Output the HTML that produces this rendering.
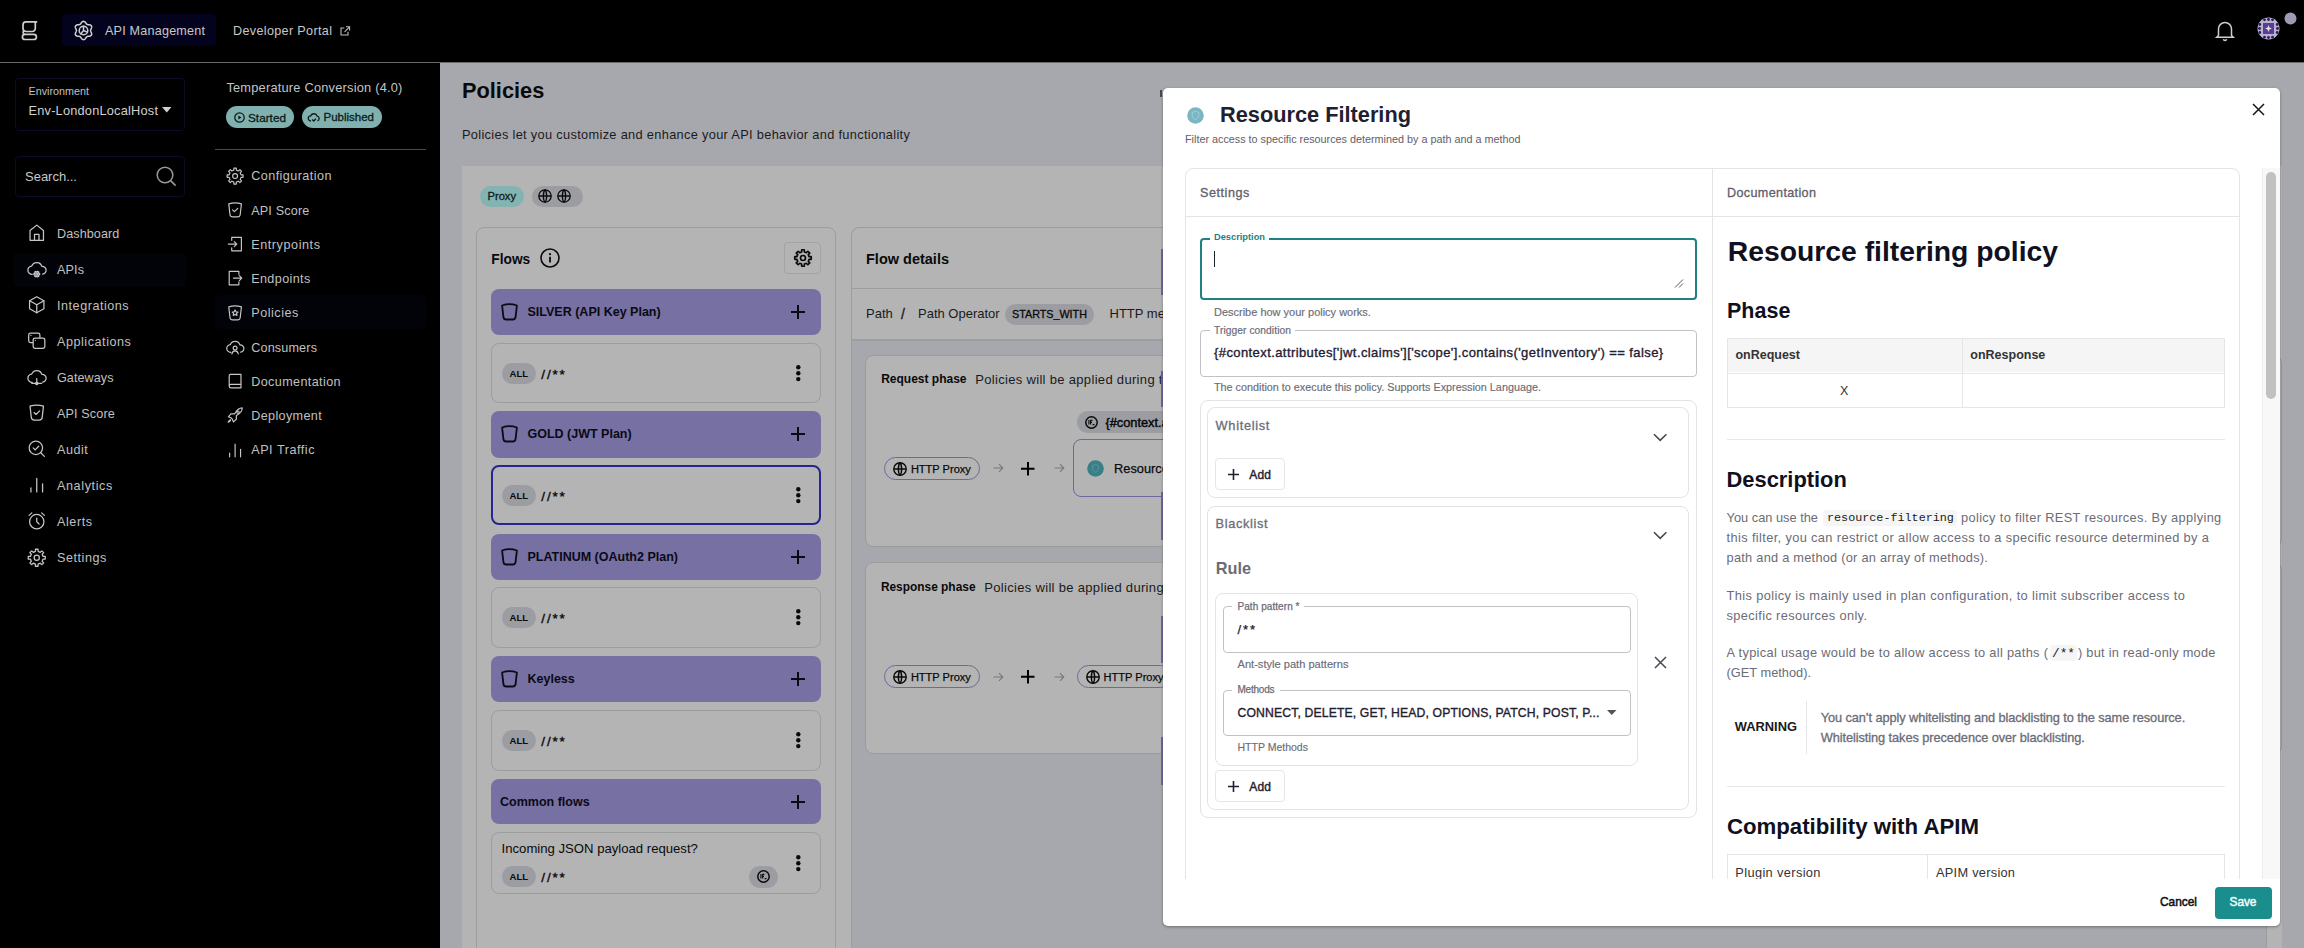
<!DOCTYPE html><html><head><meta charset="utf-8"><style>
html,body{margin:0;padding:0;width:2304px;height:948px;overflow:hidden;background:#000;}
body{position:relative;font-family:"Liberation Sans",sans-serif;}
.t{position:absolute;white-space:nowrap;}
.r{position:absolute;}
.s{position:absolute;overflow:visible;}
</style></head><body>
<div class="r" style="left:0.0px;top:0.0px;width:2304.0px;height:62.0px;background:#000;border-radius:0px;box-sizing:border-box;"></div>
<div class="r" style="left:0.0px;top:62.0px;width:2304.0px;height:1.5px;background:#6b6b6b;border-radius:0px;box-sizing:border-box;"></div>
<div class="r" style="left:0.0px;top:63.0px;width:440.0px;height:885.0px;background:#000;border-radius:0px;box-sizing:border-box;"></div>
<div class="r" style="left:440.0px;top:63.0px;width:1864.0px;height:885.0px;background:#a7a8ad;border-radius:0px;box-sizing:border-box;"></div>
<svg class="s" style="left:21.0px;top:20.0px;" width="17" height="22" viewBox="0 0 17 22"><g fill="none" stroke="#cfcfcf" stroke-width="1.7" stroke-linecap="round"><path d="M5 1.9h9.3v6.6a3 3 0 0 1-3 3H5a3 3 0 0 1-3-3V4.9a3 3 0 0 1 3-3z"/><path d="M14.3 1.9h1.2"/><path d="M2.8 10.6c-1 1-1 2.6.4 3.5"/><rect x="1.4" y="14.3" width="14" height="5.2" rx="2.6"/></g></svg>
<div class="r" style="left:62.0px;top:14.0px;width:154.0px;height:32.0px;background:#03031e;border-radius:4px;box-sizing:border-box;"></div>
<svg class="s" style="left:73.0px;top:20.0px;" width="21" height="21" viewBox="0 0 21 21"><g fill="none" stroke="#cfcfcf" stroke-width="1.5" stroke-linecap="round" stroke-linejoin="round"><path d="M17.55 10.50 L17.59 10.87 L17.71 11.26 L17.89 11.67 L18.11 12.12 L18.32 12.60 L18.51 13.10 L18.64 13.62 L18.68 14.14 L18.61 14.63 L18.42 15.07 L18.13 15.46 L17.74 15.76 L17.27 15.99 L16.76 16.14 L16.23 16.23 L15.70 16.28 L15.21 16.32 L14.76 16.37 L14.37 16.46 L14.03 16.61 L13.72 16.83 L13.45 17.12 L13.18 17.49 L12.90 17.89 L12.60 18.32 L12.25 18.74 L11.86 19.11 L11.44 19.40 L10.98 19.59 L10.50 19.65 L10.02 19.59 L9.56 19.40 L9.14 19.11 L8.75 18.74 L8.40 18.32 L8.10 17.89 L7.82 17.49 L7.55 17.12 L7.28 16.83 L6.98 16.61 L6.63 16.46 L6.24 16.37 L5.79 16.32 L5.30 16.28 L4.77 16.23 L4.24 16.14 L3.73 15.99 L3.26 15.76 L2.87 15.46 L2.58 15.07 L2.39 14.63 L2.32 14.14 L2.36 13.62 L2.49 13.10 L2.68 12.60 L2.89 12.12 L3.11 11.67 L3.29 11.26 L3.41 10.87 L3.45 10.50 L3.41 10.13 L3.29 9.74 L3.11 9.33 L2.89 8.88 L2.68 8.40 L2.49 7.90 L2.36 7.38 L2.32 6.86 L2.39 6.37 L2.58 5.93 L2.87 5.54 L3.26 5.24 L3.73 5.01 L4.24 4.86 L4.77 4.77 L5.30 4.72 L5.79 4.68 L6.24 4.63 L6.63 4.54 L6.97 4.39 L7.28 4.17 L7.55 3.88 L7.82 3.51 L8.10 3.11 L8.40 2.68 L8.75 2.26 L9.14 1.89 L9.56 1.60 L10.02 1.41 L10.50 1.35 L10.98 1.41 L11.44 1.60 L11.86 1.89 L12.25 2.26 L12.60 2.68 L12.90 3.11 L13.18 3.51 L13.45 3.88 L13.72 4.17 L14.03 4.39 L14.37 4.54 L14.76 4.63 L15.21 4.68 L15.70 4.72 L16.23 4.77 L16.76 4.86 L17.27 5.01 L17.74 5.24 L18.13 5.54 L18.42 5.93 L18.61 6.37 L18.68 6.86 L18.64 7.38 L18.51 7.90 L18.32 8.40 L18.11 8.88 L17.89 9.33 L17.71 9.74 L17.59 10.13z"/><circle cx="10.5" cy="10.5" r="4.3"/><path d="M10.5 6.2v4.3l3.7 1.6M10.5 10.5l-2.6 3.4"/></g></svg>
<div class="t" style="left:105.0px;top:23.0px;font-size:12.60px;line-height:16px;color:#c8c8c8;letter-spacing:0.2032584134615383px;">API Management</div>
<div class="t" style="left:233.0px;top:23.0px;font-size:12.60px;line-height:16px;color:#c8c8c8;letter-spacing:0.3432468750000008px;">Developer Portal</div>
<svg class="s" style="left:340.3px;top:25.8px;" width="10.5" height="9.5" viewBox="0 0 10.5 9.5"><g fill="none" stroke="#bcbcbc" stroke-width="1.1"><path d="M4.3 2H1v7h7V5.8"/><path d="M6 .8h3.6v3.6M9.6.8L4.6 5.8"/></g></svg>
<svg class="s" style="left:2215.0px;top:20.0px;" width="20" height="22" viewBox="0 0 20 22"><g fill="none" stroke="#cfcfcf" stroke-width="1.5"><path d="M3.5 15.5V9a6.5 6.5 0 0 1 13 0v6.5l1.8 1.8H1.7z"/><path d="M8.3 19.3a1.8 1.8 0 0 0 3.4 0"/></g></svg>
<svg class="s" style="left:2257.0px;top:17.0px;" width="23" height="23" viewBox="0 0 23 23"><circle cx="11.5" cy="11.5" r="11" fill="#b9b4cb"/><rect x="6" y="6" width="11" height="11" fill="#5c3a9a"/><g fill="#2c1a66"><circle cx="7.5" cy="2.8" r="1.4"/><circle cx="11.5" cy="2.5" r="1.4"/><circle cx="15.5" cy="2.8" r="1.4"/><circle cx="7.5" cy="20.2" r="1.4"/><circle cx="11.5" cy="20.5" r="1.4"/><circle cx="15.5" cy="20.2" r="1.4"/><circle cx="2.8" cy="7.5" r="1.4"/><circle cx="2.5" cy="11.5" r="1.4"/><circle cx="2.8" cy="15.5" r="1.4"/><circle cx="20.2" cy="7.5" r="1.4"/><circle cx="20.5" cy="11.5" r="1.4"/><circle cx="20.2" cy="15.5" r="1.4"/></g><path d="M11.5 8l1 2.5 2.5 1-2.5 1-1 2.5-1-2.5-2.5-1 2.5-1z" fill="#ddd"/></svg>
<svg class="s" style="left:2284.0px;top:12.0px;" width="13" height="13" viewBox="0 0 13 13"><circle cx="6.5" cy="6.5" r="6" fill="#9d9ab3"/></svg>
<div class="r" style="left:15.0px;top:78.0px;width:170.0px;height:53.0px;background:#000;border:1px solid #0b0b26;border-radius:4px;box-sizing:border-box;"></div>
<div class="t" style="left:28.5px;top:84.0px;font-size:10.78px;line-height:14px;color:#c0c0c0;">Environment</div>
<div class="t" style="left:28.5px;top:102.3px;font-size:12.80px;line-height:17px;color:#d0d0d0;letter-spacing:0.19699999999999956px;">Env-LondonLocalHost</div>
<svg class="s" style="left:162.0px;top:107.0px;" width="10" height="6" viewBox="0 0 10 6"><path d="M0 0h9.5L4.75 5.5z" fill="#d0d0d0"/></svg>
<div class="r" style="left:15.0px;top:156.0px;width:170.0px;height:41.0px;background:#000;border:1px solid #0b0b26;border-radius:4px;box-sizing:border-box;"></div>
<div class="t" style="left:25.0px;top:168.3px;font-size:12.99px;line-height:17px;color:#c8c8c8;">Search...</div>
<svg class="s" style="left:156.0px;top:166.0px;" width="21" height="21" viewBox="0 0 21 21"><g fill="none" stroke="#9a9a9a" stroke-width="1.5"><circle cx="9" cy="9" r="7.8"/><path d="M14.6 14.6l5 5"/></g></svg>
<div class="r" style="left:13.0px;top:253.0px;width:173.0px;height:34.0px;background:#020209;border-radius:4px;box-sizing:border-box;"></div>
<div class="t" style="left:57.0px;top:226.0px;font-size:12.60px;line-height:16px;color:#c0c0c0;letter-spacing:0.08218164062499955px;">Dashboard</div>
<svg class="s" style="left:25.8px;top:222.1px;" width="21.5" height="21.5" viewBox="0 0 24 24"><g fill="none" stroke="#c6c6c6" stroke-width="1.4" stroke-linecap="round" stroke-linejoin="round"><path d="M4.5 20.5V9.6L12 3.5l7.5 6.1v10.9z"/><path d="M9.5 20.5v-6.8h5v6.8"/></g></svg>
<div class="t" style="left:57.0px;top:262.0px;font-size:12.60px;line-height:16px;color:#c0c0c0;letter-spacing:0.1301249999999996px;">APIs</div>
<svg class="s" style="left:25.8px;top:258.1px;" width="21.5" height="21.5" viewBox="0 0 24 24"><g fill="none" stroke="#c6c6c6" stroke-width="1.4" stroke-linecap="round" stroke-linejoin="round"><path d="M7 18.2A4.6 4.6 0 0 1 6.4 9 6 6 0 0 1 17.7 9.4 4.3 4.3 0 0 1 18.6 18"/><path d="M14.28 17.25 L15.21 17.23 L15.21 18.77 L14.28 18.75 L13.79 19.60 L14.27 20.39 L12.94 21.16 L12.49 20.35 L11.51 20.35 L11.06 21.16 L9.73 20.39 L10.21 19.60 L9.72 18.75 L8.79 18.77 L8.79 17.23 L9.72 17.25 L10.21 16.40 L9.73 15.61 L11.06 14.84 L11.51 15.65 L12.49 15.65 L12.94 14.84 L14.27 15.61 L13.79 16.40z"/><circle cx="12" cy="18" r="1.1"/></g></svg>
<div class="t" style="left:57.0px;top:298.1px;font-size:12.60px;line-height:16px;color:#c0c0c0;letter-spacing:0.5323764204545437px;">Integrations</div>
<svg class="s" style="left:25.8px;top:294.2px;" width="21.5" height="21.5" viewBox="0 0 24 24"><g fill="none" stroke="#c6c6c6" stroke-width="1.4" stroke-linecap="round" stroke-linejoin="round"><path d="M12 3l8 4.5v9L12 21l-8-4.5v-9z"/><path d="M4 7.5l8 4.5 8-4.5M12 12v9"/></g></svg>
<div class="t" style="left:57.0px;top:334.1px;font-size:12.60px;line-height:16px;color:#c0c0c0;letter-spacing:0.5415866477272728px;">Applications</div>
<svg class="s" style="left:25.8px;top:330.2px;" width="21.5" height="21.5" viewBox="0 0 24 24"><g fill="none" stroke="#c6c6c6" stroke-width="1.4" stroke-linecap="round" stroke-linejoin="round"><rect x="3" y="3.5" width="12.5" height="10.5" rx="2"/><rect x="8" y="9" width="13" height="11.5" rx="2" fill="#000"/><path d="M5.5 6h.01M10.5 11.5h.01"/></g></svg>
<div class="t" style="left:57.0px;top:370.2px;font-size:12.60px;line-height:16px;color:#c0c0c0;letter-spacing:0.06803794642857193px;">Gateways</div>
<svg class="s" style="left:25.8px;top:366.3px;" width="21.5" height="21.5" viewBox="0 0 24 24"><g fill="none" stroke="#c6c6c6" stroke-width="1.4" stroke-linecap="round" stroke-linejoin="round"><path d="M7 18.2A4.6 4.6 0 0 1 6.4 9 6 6 0 0 1 17.7 9.4 4.3 4.3 0 0 1 18.6 18"/><path d="M12 14v5M6.5 19.5h11"/><circle cx="12" cy="19.5" r="1.3" fill="#c6c6c6"/></g></svg>
<div class="t" style="left:57.0px;top:406.2px;font-size:12.60px;line-height:16px;color:#c0c0c0;letter-spacing:0.13417773437500014px;">API Score</div>
<svg class="s" style="left:25.8px;top:402.3px;" width="21.5" height="21.5" viewBox="0 0 24 24"><g fill="none" stroke="#c6c6c6" stroke-width="1.4" stroke-linecap="round" stroke-linejoin="round"><path d="M4.5 4.6c5-1.6 10-1.6 15 0l-1.4 12.6a3.3 3.3 0 0 1-3.3 2.9H9.2a3.3 3.3 0 0 1-3.3-2.9z"/><path d="M9 11.8l2.2 2.1 4-4"/></g></svg>
<div class="t" style="left:57.0px;top:442.2px;font-size:12.60px;line-height:16px;color:#c0c0c0;letter-spacing:0.5199687499999994px;">Audit</div>
<svg class="s" style="left:25.8px;top:438.3px;" width="21.5" height="21.5" viewBox="0 0 24 24"><g fill="none" stroke="#c6c6c6" stroke-width="1.4" stroke-linecap="round" stroke-linejoin="round"><circle cx="11" cy="11" r="7.5"/><path d="M16.5 16.5l4 4"/><path d="M8 11l2.2 2.2 4-4"/></g></svg>
<div class="t" style="left:57.0px;top:478.3px;font-size:12.60px;line-height:16px;color:#c0c0c0;letter-spacing:0.6100390624999994px;">Analytics</div>
<svg class="s" style="left:25.8px;top:474.4px;" width="21.5" height="21.5" viewBox="0 0 24 24"><g fill="none" stroke="#c6c6c6" stroke-width="1.4" stroke-linecap="round" stroke-linejoin="round"><path d="M5.5 20v-4.5M12 20V5M18.5 20v-9"/></g></svg>
<div class="t" style="left:57.0px;top:514.3px;font-size:12.60px;line-height:16px;color:#c0c0c0;letter-spacing:0.5582499999999996px;">Alerts</div>
<svg class="s" style="left:25.8px;top:510.4px;" width="21.5" height="21.5" viewBox="0 0 24 24"><g fill="none" stroke="#c6c6c6" stroke-width="1.4" stroke-linecap="round" stroke-linejoin="round"><circle cx="12" cy="13" r="8"/><path d="M12 9v4.2l2.6 2.4M3.5 6l3-2.8M20.5 6l-3-2.8"/></g></svg>
<div class="t" style="left:57.0px;top:550.4px;font-size:12.60px;line-height:16px;color:#c0c0c0;letter-spacing:0.5530959821428577px;">Settings</div>
<svg class="s" style="left:25.8px;top:546.5px;" width="21.5" height="21.5" viewBox="0 0 24 24"><g fill="none" stroke="#c6c6c6" stroke-width="1.4" stroke-linecap="round" stroke-linejoin="round"><path d="M19.04 10.48 L21.49 10.57 L21.49 13.43 L19.04 13.52 L18.05 15.91 L19.72 17.70 L17.70 19.72 L15.91 18.05 L13.52 19.04 L13.43 21.49 L10.57 21.49 L10.48 19.04 L8.09 18.05 L6.30 19.72 L4.28 17.70 L5.95 15.91 L4.96 13.52 L2.51 13.43 L2.51 10.57 L4.96 10.48 L5.95 8.09 L4.28 6.30 L6.30 4.28 L8.09 5.95 L10.48 4.96 L10.57 2.51 L13.43 2.51 L13.52 4.96 L15.91 5.95 L17.70 4.28 L19.72 6.30 L18.05 8.09z"/><circle cx="12" cy="12" r="2.9"/></g></svg>
<div class="t" style="left:226.4px;top:79.1px;font-size:12.80px;line-height:17px;color:#c4c4c4;letter-spacing:0.22085185185185058px;">Temperature Conversion (4.0)</div>
<div class="r" style="left:226.0px;top:106.3px;width:68.0px;height:21.7px;background:#80b1af;border-radius:11px;box-sizing:border-box;"></div>
<svg class="s" style="left:233.5px;top:112.0px;" width="11" height="11" viewBox="0 0 11 11"><circle cx="5.5" cy="5.5" r="4.7" fill="none" stroke="#0c1a1a" stroke-width="1.3"/><path d="M4.3 3.4v4.2l3.2-2.1z" fill="#0c1a1a"/></svg>
<div class="t" style="left:248.0px;top:109.7px;font-size:11.79px;line-height:15px;color:#0c1a1a;-webkit-text-stroke:0.3px #0c1a1a;">Started</div>
<div class="r" style="left:301.6px;top:106.3px;width:80.4px;height:21.7px;background:#80b1af;border-radius:11px;box-sizing:border-box;"></div>
<svg class="s" style="left:308.0px;top:111.5px;" width="11" height="11" viewBox="0 0 11 11"><path d="M3 9A2.6 2.6 0 0 1 2.7 3.8 3.5 3.5 0 0 1 9.2 4.1a2.5 2.5 0 0 1 .3 4.8M4.2 7.6l1.5 1.4 2.3-2.3" fill="none" stroke="#0c1a1a" stroke-width="1.3"/></svg>
<div class="t" style="left:323.5px;top:109.7px;font-size:11.50px;line-height:15px;color:#0c1a1a;-webkit-text-stroke:0.3px #0c1a1a;">Published</div>
<div class="r" style="left:215.0px;top:149.0px;width:211.0px;height:1.0px;background:#4a4a4a;border-radius:0px;box-sizing:border-box;"></div>
<div class="r" style="left:215.0px;top:295.0px;width:211.0px;height:33.5px;background:#020209;border-radius:4px;box-sizing:border-box;"></div>
<div class="t" style="left:251.2px;top:168.2px;font-size:12.60px;line-height:16px;color:#c0c0c0;letter-spacing:0.445807291666668px;">Configuration</div>
<svg class="s" style="left:224.7px;top:165.5px;" width="20.2" height="20.2" viewBox="0 0 24 24"><g fill="none" stroke="#c6c6c6" stroke-width="1.4" stroke-linecap="round" stroke-linejoin="round"><path d="M19.04 10.48 L21.49 10.57 L21.49 13.43 L19.04 13.52 L18.05 15.91 L19.72 17.70 L17.70 19.72 L15.91 18.05 L13.52 19.04 L13.43 21.49 L10.57 21.49 L10.48 19.04 L8.09 18.05 L6.30 19.72 L4.28 17.70 L5.95 15.91 L4.96 13.52 L2.51 13.43 L2.51 10.57 L4.96 10.48 L5.95 8.09 L4.28 6.30 L6.30 4.28 L8.09 5.95 L10.48 4.96 L10.57 2.51 L13.43 2.51 L13.52 4.96 L15.91 5.95 L17.70 4.28 L19.72 6.30 L18.05 8.09z"/><circle cx="12" cy="12" r="2.9"/></g></svg>
<div class="t" style="left:251.2px;top:202.5px;font-size:12.60px;line-height:16px;color:#c0c0c0;letter-spacing:0.18417773437499907px;">API Score</div>
<svg class="s" style="left:224.7px;top:199.8px;" width="20.2" height="20.2" viewBox="0 0 24 24"><g fill="none" stroke="#c6c6c6" stroke-width="1.4" stroke-linecap="round" stroke-linejoin="round"><path d="M4.5 4.6c5-1.6 10-1.6 15 0l-1.4 12.6a3.3 3.3 0 0 1-3.3 2.9H9.2a3.3 3.3 0 0 1-3.3-2.9z"/><path d="M9 11.8l2.2 2.1 4-4"/></g></svg>
<div class="t" style="left:251.2px;top:236.7px;font-size:12.60px;line-height:16px;color:#c0c0c0;letter-spacing:0.5767515625000016px;">Entrypoints</div>
<svg class="s" style="left:224.7px;top:234.0px;" width="20.2" height="20.2" viewBox="0 0 24 24"><g fill="none" stroke="#c6c6c6" stroke-width="1.4" stroke-linecap="round" stroke-linejoin="round"><path d="M8 7.5V4h11.5v16H8v-3.5"/><path d="M4 12h10M11 9l3 3-3 3"/></g></svg>
<div class="t" style="left:251.2px;top:271.0px;font-size:12.60px;line-height:16px;color:#c0c0c0;letter-spacing:0.38207226562500374px;">Endpoints</div>
<svg class="s" style="left:224.7px;top:268.3px;" width="20.2" height="20.2" viewBox="0 0 24 24"><g fill="none" stroke="#c6c6c6" stroke-width="1.4" stroke-linecap="round" stroke-linejoin="round"><path d="M16.5 7.5V4H5v16h11.5v-3.5"/><path d="M10 12h10M17 9l3 3-3 3"/></g></svg>
<div class="t" style="left:251.2px;top:305.3px;font-size:12.60px;line-height:16px;color:#c0c0c0;letter-spacing:0.5401696428571421px;">Policies</div>
<svg class="s" style="left:224.7px;top:302.6px;" width="20.2" height="20.2" viewBox="0 0 24 24"><g fill="none" stroke="#c6c6c6" stroke-width="1.4" stroke-linecap="round" stroke-linejoin="round"><path d="M4.5 4.6c5-1.6 10-1.6 15 0l-1.4 12.6a3.3 3.3 0 0 1-3.3 2.9H9.2a3.3 3.3 0 0 1-3.3-2.9z"/><path d="M12 8.3l1.1 2.2 2.4.3-1.8 1.6.5 2.4-2.2-1.2-2.2 1.2.5-2.4-1.8-1.6 2.4-.3z"/></g></svg>
<div class="t" style="left:251.2px;top:339.6px;font-size:12.60px;line-height:16px;color:#c0c0c0;letter-spacing:0.1720742187500015px;">Consumers</div>
<svg class="s" style="left:224.7px;top:336.9px;" width="20.2" height="20.2" viewBox="0 0 24 24"><g fill="none" stroke="#c6c6c6" stroke-width="1.4" stroke-linecap="round" stroke-linejoin="round"><path d="M7 18.2A4.6 4.6 0 0 1 6.4 9 6 6 0 0 1 17.7 9.4 4.3 4.3 0 0 1 18.6 18"/><circle cx="12" cy="13.2" r="2.3"/><path d="M8.2 20c.5-2.4 2-3.6 3.8-3.6s3.3 1.2 3.8 3.6"/></g></svg>
<div class="t" style="left:251.2px;top:373.8px;font-size:12.60px;line-height:16px;color:#c0c0c0;letter-spacing:0.3874375000000043px;">Documentation</div>
<svg class="s" style="left:224.7px;top:371.1px;" width="20.2" height="20.2" viewBox="0 0 24 24"><g fill="none" stroke="#c6c6c6" stroke-width="1.4" stroke-linecap="round" stroke-linejoin="round"><path d="M5 18V5.5A1.5 1.5 0 0 1 6.5 4H19v16H7a2 2 0 0 1-2-2zM5 18a2 2 0 0 1 2-2h12"/></g></svg>
<div class="t" style="left:251.2px;top:408.1px;font-size:12.60px;line-height:16px;color:#c0c0c0;letter-spacing:0.36280208333333364px;">Deployment</div>
<svg class="s" style="left:224.7px;top:405.4px;" width="20.2" height="20.2" viewBox="0 0 24 24"><g fill="none" stroke="#c6c6c6" stroke-width="1.4" stroke-linecap="round" stroke-linejoin="round"><path d="M7.5 15.5L4 14l3-3.5h4.5C14 6 17.5 3.5 20.5 3.5c0 3-2.5 6.5-7 9V17L10 20l-1.5-3.5z"/><circle cx="15.5" cy="8.5" r="1.4"/><path d="M6.5 17.5c-1.3.6-2.3 1.6-2.8 3 1.4-.5 2.4-1.5 3-2.8"/></g></svg>
<div class="t" style="left:251.2px;top:442.4px;font-size:12.60px;line-height:16px;color:#c0c0c0;letter-spacing:0.5410875000000018px;">API Traffic</div>
<svg class="s" style="left:224.7px;top:439.7px;" width="20.2" height="20.2" viewBox="0 0 24 24"><g fill="none" stroke="#c6c6c6" stroke-width="1.4" stroke-linecap="round" stroke-linejoin="round"><path d="M5.5 20v-4.5M12 20V5M18.5 20v-9"/></g></svg>
<div class="t" style="left:462.0px;top:76.7px;font-size:21.77px;line-height:28px;font-weight:700;color:#0a0a0a;">Policies</div>
<div class="t" style="left:462.0px;top:125.5px;font-size:12.80px;line-height:17px;color:#1b1b1b;letter-spacing:0.3178493150684928px;">Policies let you customize and enhance your API behavior and functionality</div>
<div class="r" style="left:462.0px;top:166.0px;width:1820.0px;height:782.0px;background:#b4b4b4;border-radius:0px;box-sizing:border-box;"></div>
<div class="r" style="left:479.6px;top:185.8px;width:44.4px;height:20.9px;background:#84b4b2;border-radius:11px;box-sizing:border-box;"></div>
<div class="t" style="left:487.5px;top:189.3px;font-size:11.15px;line-height:14px;color:#0d1c1c;-webkit-text-stroke:0.3px #0d1c1c;">Proxy</div>
<div class="r" style="left:531.9px;top:185.8px;width:50.7px;height:20.9px;background:#9c9da2;border-radius:11px;box-sizing:border-box;"></div>
<svg class="s" style="left:538.0px;top:189.3px;" width="14" height="14" viewBox="0 0 14 14"><g fill="none" stroke="#0a0a0a" stroke-width="1.3"><circle cx="7" cy="7" r="6.2"/><path d="M.8 7h12.4M7 .8c-2.2 2.2-2.2 10.2 0 12.4M7 .8c2.2 2.2 2.2 10.2 0 12.4"/></g></svg>
<svg class="s" style="left:557.0px;top:189.3px;" width="14" height="14" viewBox="0 0 14 14"><g fill="none" stroke="#0a0a0a" stroke-width="1.3"><circle cx="7" cy="7" r="6.2"/><path d="M.8 7h12.4M7 .8c-2.2 2.2-2.2 10.2 0 12.4M7 .8c2.2 2.2 2.2 10.2 0 12.4"/></g></svg>
<div class="r" style="left:476.4px;top:227.0px;width:360.1px;height:733.0px;background:#b4b4b4;border:1px solid #9d9d9d;border-radius:8px;box-sizing:border-box;"></div>
<div class="t" style="left:491.3px;top:250.5px;font-size:13.76px;line-height:18px;font-weight:700;color:#0a0a0a;">Flows</div>
<svg class="s" style="left:539.5px;top:248.3px;" width="20" height="20" viewBox="0 0 20 20"><circle cx="10" cy="10" r="9" fill="none" stroke="#0a0a0a" stroke-width="1.6"/><circle cx="10" cy="6.2" r="1.1" fill="#0a0a0a"/><path d="M10 8.8v5.6" stroke="#0a0a0a" stroke-width="1.8"/></svg>
<div class="r" style="left:784.4px;top:242.0px;width:36.3px;height:31.8px;background:#b4b4b4;border:1px solid #a3a3a3;border-radius:4px;box-sizing:border-box;"></div>
<svg class="s" style="left:793.0px;top:248.3px;" width="20" height="20" viewBox="0 0 24 24"><g fill="none" stroke="#0a0a0a" stroke-width="2.0" stroke-linecap="round" stroke-linejoin="round"><path d="M19.32 10.36 L21.88 10.44 L21.88 13.56 L19.32 13.64 L18.33 16.02 L20.09 17.88 L17.88 20.09 L16.02 18.33 L13.64 19.32 L13.56 21.88 L10.44 21.88 L10.36 19.32 L7.98 18.33 L6.12 20.09 L3.91 17.88 L5.67 16.02 L4.68 13.64 L2.12 13.56 L2.12 10.44 L4.68 10.36 L5.67 7.98 L3.91 6.12 L6.12 3.91 L7.98 5.67 L10.36 4.68 L10.44 2.12 L13.56 2.12 L13.64 4.68 L16.02 5.67 L17.88 3.91 L20.09 6.12 L18.33 7.98z"/><circle cx="12" cy="12" r="3"/></g></svg>
<div class="r" style="left:491.3px;top:288.5px;width:329.4px;height:46.5px;background:#7670a3;border-radius:8px;box-sizing:border-box;"></div>
<svg class="s" style="left:501.0px;top:302.8px;" width="17" height="17" viewBox="0 0 17 17"><path d="M1.1 2.5c4.9-1.7 9.9-1.7 14.8 0l-1.3 11.3a3 3 0 0 1-3 2.7H5.4a3 3 0 0 1-3-2.7z" fill="none" stroke="#0a0a14" stroke-width="1.8" stroke-linejoin="round"/></svg>
<div class="t" style="left:527.5px;top:303.8px;font-size:12.50px;line-height:16px;font-weight:700;color:#0a0a14;">SILVER (API Key Plan)</div>
<svg class="s" style="left:791.2px;top:304.8px;" width="14" height="14" viewBox="0 0 14 14"><path d="M7 0v14M0 7h14" stroke="#0a0a14" stroke-width="2"/></svg>
<div class="r" style="left:491.3px;top:411.0px;width:329.4px;height:46.5px;background:#7670a3;border-radius:8px;box-sizing:border-box;"></div>
<svg class="s" style="left:501.0px;top:425.2px;" width="17" height="17" viewBox="0 0 17 17"><path d="M1.1 2.5c4.9-1.7 9.9-1.7 14.8 0l-1.3 11.3a3 3 0 0 1-3 2.7H5.4a3 3 0 0 1-3-2.7z" fill="none" stroke="#0a0a14" stroke-width="1.8" stroke-linejoin="round"/></svg>
<div class="t" style="left:527.5px;top:426.2px;font-size:12.50px;line-height:16px;font-weight:700;color:#0a0a14;">GOLD (JWT Plan)</div>
<svg class="s" style="left:791.2px;top:427.2px;" width="14" height="14" viewBox="0 0 14 14"><path d="M7 0v14M0 7h14" stroke="#0a0a14" stroke-width="2"/></svg>
<div class="r" style="left:491.3px;top:533.5px;width:329.4px;height:46.5px;background:#7670a3;border-radius:8px;box-sizing:border-box;"></div>
<svg class="s" style="left:501.0px;top:547.8px;" width="17" height="17" viewBox="0 0 17 17"><path d="M1.1 2.5c4.9-1.7 9.9-1.7 14.8 0l-1.3 11.3a3 3 0 0 1-3 2.7H5.4a3 3 0 0 1-3-2.7z" fill="none" stroke="#0a0a14" stroke-width="1.8" stroke-linejoin="round"/></svg>
<div class="t" style="left:527.5px;top:548.8px;font-size:12.50px;line-height:16px;font-weight:700;color:#0a0a14;">PLATINUM (OAuth2 Plan)</div>
<svg class="s" style="left:791.2px;top:549.8px;" width="14" height="14" viewBox="0 0 14 14"><path d="M7 0v14M0 7h14" stroke="#0a0a14" stroke-width="2"/></svg>
<div class="r" style="left:491.3px;top:656.2px;width:329.4px;height:45.5px;background:#7670a3;border-radius:8px;box-sizing:border-box;"></div>
<svg class="s" style="left:501.0px;top:670.0px;" width="17" height="17" viewBox="0 0 17 17"><path d="M1.1 2.5c4.9-1.7 9.9-1.7 14.8 0l-1.3 11.3a3 3 0 0 1-3 2.7H5.4a3 3 0 0 1-3-2.7z" fill="none" stroke="#0a0a14" stroke-width="1.8" stroke-linejoin="round"/></svg>
<div class="t" style="left:527.5px;top:671.0px;font-size:12.50px;line-height:16px;font-weight:700;color:#0a0a14;">Keyless</div>
<svg class="s" style="left:791.2px;top:672.0px;" width="14" height="14" viewBox="0 0 14 14"><path d="M7 0v14M0 7h14" stroke="#0a0a14" stroke-width="2"/></svg>
<div class="r" style="left:491.3px;top:778.7px;width:329.4px;height:45.8px;background:#7670a3;border-radius:8px;box-sizing:border-box;"></div>
<div class="t" style="left:500.0px;top:793.6px;font-size:12.50px;line-height:16px;font-weight:700;color:#0a0a14;">Common flows</div>
<svg class="s" style="left:791.2px;top:794.6px;" width="14" height="14" viewBox="0 0 14 14"><path d="M7 0v14M0 7h14" stroke="#0a0a14" stroke-width="2"/></svg>
<div class="r" style="left:491.0px;top:343.0px;width:330.0px;height:60.4px;background:#b4b4b4;border:1px solid #9d9d9d;border-radius:8px;box-sizing:border-box;"></div>
<div class="r" style="left:502.0px;top:362.6px;width:34.1px;height:21.2px;background:#9c9da2;border-radius:11px;box-sizing:border-box;"></div>
<div class="t" style="left:509.6px;top:367.6px;font-size:9.57px;line-height:12px;font-weight:700;color:#0a0a0a;">ALL</div>
<div class="t" style="left:541.3px;top:365.5px;font-size:13.50px;line-height:18px;color:#0a0a0a;letter-spacing:1.8307552083333338px;-webkit-text-stroke:0.35px #0a0a0a;">//**</div>
<svg class="s" style="left:795.6px;top:365.0px;" width="5" height="17" viewBox="0 0 5 17"><g fill="#0a0a0a"><circle cx="2.3" cy="2.3" r="2.2"/><circle cx="2.3" cy="8.2" r="2.2"/><circle cx="2.3" cy="14.1" r="2.2"/></g></svg>
<div class="r" style="left:491.0px;top:465.4px;width:330.0px;height:59.9px;background:#b4b4b4;border:2px solid #2b2490;border-radius:8px;box-sizing:border-box;"></div>
<div class="r" style="left:502.0px;top:484.7px;width:34.1px;height:21.2px;background:#9c9da2;border-radius:11px;box-sizing:border-box;"></div>
<div class="t" style="left:509.6px;top:489.7px;font-size:9.57px;line-height:12px;font-weight:700;color:#0a0a0a;">ALL</div>
<div class="t" style="left:541.3px;top:487.6px;font-size:13.50px;line-height:18px;color:#0a0a0a;letter-spacing:1.8307552083333338px;-webkit-text-stroke:0.35px #0a0a0a;">//**</div>
<svg class="s" style="left:795.6px;top:487.1px;" width="5" height="17" viewBox="0 0 5 17"><g fill="#0a0a0a"><circle cx="2.3" cy="2.3" r="2.2"/><circle cx="2.3" cy="8.2" r="2.2"/><circle cx="2.3" cy="14.1" r="2.2"/></g></svg>
<div class="r" style="left:491.0px;top:587.3px;width:330.0px;height:60.7px;background:#b4b4b4;border:1px solid #9d9d9d;border-radius:8px;box-sizing:border-box;"></div>
<div class="r" style="left:502.0px;top:607.0px;width:34.1px;height:21.2px;background:#9c9da2;border-radius:11px;box-sizing:border-box;"></div>
<div class="t" style="left:509.6px;top:612.0px;font-size:9.57px;line-height:12px;font-weight:700;color:#0a0a0a;">ALL</div>
<div class="t" style="left:541.3px;top:609.9px;font-size:13.50px;line-height:18px;color:#0a0a0a;letter-spacing:1.8307552083333338px;-webkit-text-stroke:0.35px #0a0a0a;">//**</div>
<svg class="s" style="left:795.6px;top:609.4px;" width="5" height="17" viewBox="0 0 5 17"><g fill="#0a0a0a"><circle cx="2.3" cy="2.3" r="2.2"/><circle cx="2.3" cy="8.2" r="2.2"/><circle cx="2.3" cy="14.1" r="2.2"/></g></svg>
<div class="r" style="left:491.0px;top:709.9px;width:330.0px;height:60.7px;background:#b4b4b4;border:1px solid #9d9d9d;border-radius:8px;box-sizing:border-box;"></div>
<div class="r" style="left:502.0px;top:729.6px;width:34.1px;height:21.2px;background:#9c9da2;border-radius:11px;box-sizing:border-box;"></div>
<div class="t" style="left:509.6px;top:734.6px;font-size:9.57px;line-height:12px;font-weight:700;color:#0a0a0a;">ALL</div>
<div class="t" style="left:541.3px;top:732.5px;font-size:13.50px;line-height:18px;color:#0a0a0a;letter-spacing:1.8307552083333338px;-webkit-text-stroke:0.35px #0a0a0a;">//**</div>
<svg class="s" style="left:795.6px;top:732.0px;" width="5" height="17" viewBox="0 0 5 17"><g fill="#0a0a0a"><circle cx="2.3" cy="2.3" r="2.2"/><circle cx="2.3" cy="8.2" r="2.2"/><circle cx="2.3" cy="14.1" r="2.2"/></g></svg>
<div class="r" style="left:491.0px;top:832.3px;width:330.0px;height:61.3px;background:#b4b4b4;border:1px solid #9d9d9d;border-radius:8px;box-sizing:border-box;"></div>
<div class="t" style="left:501.6px;top:839.5px;font-size:13.14px;line-height:17px;color:#0a0a0a;">Incoming JSON payload request?</div>
<div class="r" style="left:502.0px;top:865.9px;width:34.1px;height:21.2px;background:#9c9da2;border-radius:11px;box-sizing:border-box;"></div>
<div class="t" style="left:509.6px;top:870.9px;font-size:9.57px;line-height:12px;font-weight:700;color:#0a0a0a;">ALL</div>
<div class="t" style="left:541.3px;top:868.8px;font-size:13.50px;line-height:18px;color:#0a0a0a;letter-spacing:1.8307552083333338px;-webkit-text-stroke:0.35px #0a0a0a;">//**</div>
<div class="r" style="left:749.0px;top:865.8px;width:29.4px;height:21.8px;background:#9c9da2;border-radius:11px;box-sizing:border-box;"></div>
<svg class="s" style="left:757.2px;top:870.2px;" width="13" height="13" viewBox="0 0 13 13"><circle cx="6.5" cy="6.5" r="5.7" fill="none" stroke="#0a0a0a" stroke-width="1.5"/><path d="M3.9 4v4.6M5.6 4v4.6M5.4 4.4h2M5.4 6.4h1.6M7.6 8.6h1.8" stroke="#0a0a0a" stroke-width="1.1"/></svg>
<svg class="s" style="left:795.6px;top:854.7px;" width="5" height="17" viewBox="0 0 5 17"><g fill="#0a0a0a"><circle cx="2.3" cy="2.3" r="2.2"/><circle cx="2.3" cy="8.2" r="2.2"/><circle cx="2.3" cy="14.1" r="2.2"/></g></svg>
<div class="r" style="left:851.0px;top:227.0px;width:1416.0px;height:733.0px;background:#a7a8ad;border:1px solid #9d9d9d;border-radius:8px;box-sizing:border-box;"></div>
<div class="r" style="left:852.0px;top:228.0px;width:1414.0px;height:111.5px;background:#b4b4b4;border-radius:8px 8px 0 0;box-sizing:border-box;"></div>
<div class="r" style="left:852.0px;top:288.0px;width:1414.0px;height:1.0px;background:#9d9d9d;border-radius:0px;box-sizing:border-box;"></div>
<div class="r" style="left:852.0px;top:338.7px;width:1414.0px;height:2.0px;background:#9c9da1;border-radius:0px;box-sizing:border-box;"></div>
<div class="t" style="left:866.0px;top:250.0px;font-size:14.50px;line-height:19px;font-weight:700;color:#0a0a0a;">Flow details</div>
<div class="t" style="left:866.0px;top:305.0px;font-size:13.00px;line-height:17px;color:#1a1a1a;">Path</div>
<div class="t" style="left:901.0px;top:304.5px;font-size:14.00px;line-height:18px;color:#1a1a1a;-webkit-text-stroke:0.3px #1a1a1a;">/</div>
<div class="t" style="left:918.0px;top:305.0px;font-size:13.00px;line-height:17px;color:#1a1a1a;">Path Operator</div>
<div class="r" style="left:1004.6px;top:304.0px;width:89.7px;height:20.6px;background:#9c9da2;border-radius:11px;box-sizing:border-box;"></div>
<div class="t" style="left:1012.0px;top:307.3px;font-size:10.77px;line-height:14px;color:#0a0a0a;-webkit-text-stroke:0.3px #0a0a0a;">STARTS_WITH</div>
<div class="t" style="left:1109.5px;top:305.0px;font-size:13.00px;line-height:17px;color:#1a1a1a;">HTTP methods</div>
<div class="r" style="left:865.2px;top:354.6px;width:1416.8px;height:192.9px;background:#b4b4b4;border:1px solid #9b9b9b;border-radius:8px;box-sizing:border-box;"></div>
<div class="t" style="left:881.2px;top:371.3px;font-size:12.01px;line-height:16px;font-weight:700;color:#0a0a0a;">Request phase</div>
<div class="t" style="left:975.2px;top:370.8px;font-size:13.00px;line-height:17px;color:#1a1a1a;letter-spacing:0.32px;">Policies will be applied during the request</div>
<div class="r" style="left:1077.0px;top:410.7px;width:223.0px;height:22.3px;background:#9c9da2;border-radius:11px;box-sizing:border-box;"></div>
<svg class="s" style="left:1085.0px;top:415.9px;" width="13" height="13" viewBox="0 0 13 13"><circle cx="6.5" cy="6.5" r="5.7" fill="none" stroke="#0a0a0a" stroke-width="1.5"/><path d="M3.9 4v4.6M5.6 4v4.6M5.4 4.4h2M5.4 6.4h1.6M7.6 8.6h1.8" stroke="#0a0a0a" stroke-width="1.1"/></svg>
<div class="t" style="left:1105.4px;top:413.5px;font-size:12.80px;line-height:17px;color:#0a0a0a;-webkit-text-stroke:0.45px #0a0a0a;">{#context.attributes}</div>
<div class="r" style="left:1073.2px;top:439.3px;width:326.8px;height:58.2px;background:#b4b4b4;border:1px solid #6f68a0;border-radius:8px;box-sizing:border-box;"></div>
<svg class="s" style="left:1087.2px;top:460.3px;" width="17" height="17" viewBox="0 0 17 17"><circle cx="8.5" cy="8.5" r="8.3" fill="#3a7f87"/><path d="M8.5 4.6l3 1.2v2.4c0 2-1.3 3.3-3 4.1-1.7-.8-3-2.1-3-4.1V5.8z" fill="none" stroke="#5d9aa1" stroke-width=".8"/></svg>
<div class="t" style="left:1114.1px;top:460.2px;font-size:12.80px;line-height:17px;color:#0a0a0a;-webkit-text-stroke:0.25px #0a0a0a;">Resource Filtering</div>
<div class="r" style="left:865.2px;top:562.3px;width:1416.8px;height:192.0px;background:#b4b4b4;border:1px solid #9b9b9b;border-radius:8px;box-sizing:border-box;"></div>
<div class="t" style="left:880.9px;top:579.8px;font-size:11.92px;line-height:15px;font-weight:700;color:#0a0a0a;">Response phase</div>
<div class="t" style="left:984.2px;top:578.8px;font-size:13.00px;line-height:17px;color:#1a1a1a;letter-spacing:0.32px;">Policies will be applied during the response</div>
<div class="r" style="left:884.0px;top:456.9px;width:95.5px;height:23.0px;background:transparent;border:1.2px solid #6f68a0;border-radius:12px;box-sizing:border-box;"></div>
<svg class="s" style="left:892.8px;top:461.7px;" width="14" height="14" viewBox="0 0 14 14"><g fill="none" stroke="#0a0a0a" stroke-width="1.4"><circle cx="7" cy="7" r="6.2"/><path d="M.8 7h12.4M7 .8c-2.2 2.2-2.2 10.2 0 12.4M7 .8c2.2 2.2 2.2 10.2 0 12.4"/></g></svg>
<div class="t" style="left:910.9px;top:461.7px;font-size:11.06px;line-height:14px;color:#0a0a0a;-webkit-text-stroke:0.25px #0a0a0a;">HTTP Proxy</div>
<svg class="s" style="left:992.7px;top:463.4px;" width="11" height="10" viewBox="0 0 11 10"><path d="M.5 5h9.5M6 1.2L9.8 5 6 8.8" fill="none" stroke="#787878" stroke-width="1.1"/></svg>
<svg class="s" style="left:1021.3px;top:461.7px;" width="14" height="14" viewBox="0 0 14 14"><path d="M7 0v13.5M0 6.75h13.5" stroke="#000" stroke-width="2"/></svg>
<svg class="s" style="left:1054.0px;top:463.4px;" width="11" height="10" viewBox="0 0 11 10"><path d="M.5 5h9.5M6 1.2L9.8 5 6 8.8" fill="none" stroke="#787878" stroke-width="1.1"/></svg>
<div class="r" style="left:884.0px;top:665.3px;width:95.5px;height:23.0px;background:transparent;border:1.2px solid #6f68a0;border-radius:12px;box-sizing:border-box;"></div>
<svg class="s" style="left:892.8px;top:670.1px;" width="14" height="14" viewBox="0 0 14 14"><g fill="none" stroke="#0a0a0a" stroke-width="1.4"><circle cx="7" cy="7" r="6.2"/><path d="M.8 7h12.4M7 .8c-2.2 2.2-2.2 10.2 0 12.4M7 .8c2.2 2.2 2.2 10.2 0 12.4"/></g></svg>
<div class="t" style="left:910.9px;top:670.1px;font-size:11.06px;line-height:14px;color:#0a0a0a;-webkit-text-stroke:0.25px #0a0a0a;">HTTP Proxy</div>
<svg class="s" style="left:992.7px;top:671.8px;" width="11" height="10" viewBox="0 0 11 10"><path d="M.5 5h9.5M6 1.2L9.8 5 6 8.8" fill="none" stroke="#787878" stroke-width="1.1"/></svg>
<svg class="s" style="left:1021.3px;top:670.1px;" width="14" height="14" viewBox="0 0 14 14"><path d="M7 0v13.5M0 6.75h13.5" stroke="#000" stroke-width="2"/></svg>
<svg class="s" style="left:1054.0px;top:671.8px;" width="11" height="10" viewBox="0 0 11 10"><path d="M.5 5h9.5M6 1.2L9.8 5 6 8.8" fill="none" stroke="#787878" stroke-width="1.1"/></svg>
<div class="r" style="left:1076.7px;top:665.3px;width:95.5px;height:23.0px;background:transparent;border:1.2px solid #6f68a0;border-radius:12px;box-sizing:border-box;"></div>
<svg class="s" style="left:1085.5px;top:670.1px;" width="14" height="14" viewBox="0 0 14 14"><g fill="none" stroke="#0a0a0a" stroke-width="1.4"><circle cx="7" cy="7" r="6.2"/><path d="M.8 7h12.4M7 .8c-2.2 2.2-2.2 10.2 0 12.4M7 .8c2.2 2.2 2.2 10.2 0 12.4"/></g></svg>
<div class="t" style="left:1103.6px;top:670.1px;font-size:11.06px;line-height:14px;color:#0a0a0a;-webkit-text-stroke:0.25px #0a0a0a;">HTTP Proxy</div>
<div class="r" style="left:1160.5px;top:248.6px;width:2.0px;height:46.4px;background:#6f68a0;border-radius:0px;box-sizing:border-box;"></div>
<div class="r" style="left:1160.5px;top:371.0px;width:2.0px;height:36.0px;background:#6f68a0;border-radius:0px;box-sizing:border-box;"></div>
<div class="r" style="left:1160.5px;top:492.0px;width:2.0px;height:48.0px;background:#6f68a0;border-radius:0px;box-sizing:border-box;"></div>
<div class="r" style="left:1160.5px;top:616.0px;width:2.0px;height:47.0px;background:#6f68a0;border-radius:0px;box-sizing:border-box;"></div>
<div class="r" style="left:1160.5px;top:737.0px;width:2.0px;height:48.0px;background:#6f68a0;border-radius:0px;box-sizing:border-box;"></div>
<div class="r" style="left:1159.5px;top:89.5px;width:2.5px;height:7.5px;background:#4a4a4e;border-radius:0px;box-sizing:border-box;"></div>
<div class="r" style="left:1162.5px;top:87.5px;width:1117.0px;height:838.5px;background:#fff;border-radius:5px;box-sizing:border-box;box-shadow:0 1px 3px rgba(0,0,0,.35);"></div>
<svg class="s" style="left:1186.7px;top:107.3px;" width="17" height="17" viewBox="0 0 17 17"><circle cx="8.5" cy="8.5" r="8.3" fill="#7ab7c2"/><path d="M8.5 4.2l3.3 1.3v2.6c0 2.3-1.5 3.8-3.3 4.6-1.8-.8-3.3-2.3-3.3-4.6V5.5z" fill="none" stroke="#a9d3da" stroke-width=".8"/></svg>
<div class="t" style="left:1220.0px;top:101.4px;font-size:21.75px;line-height:28px;font-weight:700;color:#1f2030;">Resource Filtering</div>
<div class="t" style="left:1185.0px;top:131.8px;font-size:10.81px;line-height:14px;color:#5f606a;">Filter access to specific resources determined by a path and a method</div>
<svg class="s" style="left:2251.5px;top:102.5px;" width="13" height="13" viewBox="0 0 13 13"><path d="M1 1l11 11M12 1L1 12" stroke="#15151c" stroke-width="1.45"/></svg>
<div style="position:absolute;left:1163px;top:160px;width:1117px;height:719px;overflow:hidden;">
<div style="position:absolute;left:-1163px;top:-160px;width:2304px;height:948px;">
<div class="r" style="left:1185.0px;top:168.4px;width:1055.0px;height:831.6px;background:#fff;border:1px solid #e4e4e4;border-radius:8px;box-sizing:border-box;"></div>
<div class="r" style="left:1186.0px;top:216.0px;width:1053.0px;height:1.0px;background:#e4e4e4;border-radius:0px;box-sizing:border-box;"></div>
<div class="r" style="left:1711.5px;top:169.0px;width:1.0px;height:831.0px;background:#e4e4e4;border-radius:0px;box-sizing:border-box;"></div>
<div class="t" style="left:1200.0px;top:185.0px;font-size:12.60px;line-height:16px;color:#5f606a;letter-spacing:0.5388102678571361px;-webkit-text-stroke:0.3px #5f606a;">Settings</div>
<div class="t" style="left:1727.0px;top:185.0px;font-size:12.60px;line-height:16px;color:#5f606a;letter-spacing:0.35410416666666816px;-webkit-text-stroke:0.3px #5f606a;">Documentation</div>
<div class="r" style="left:1200.3px;top:237.7px;width:496.7px;height:62.5px;background:#fff;border:2px solid #1d8281;border-radius:4px;box-sizing:border-box;"></div>
<div class="r" style="left:1210.0px;top:232.0px;width:59.0px;height:10.0px;background:#fff;border-radius:0px;box-sizing:border-box;"></div>
<div class="t" style="left:1214.0px;top:231.0px;font-size:9.27px;line-height:12px;font-weight:700;color:#1d8281;">Description</div>
<div class="r" style="left:1214.0px;top:251.0px;width:1.2px;height:16.0px;background:#1f2030;border-radius:0px;box-sizing:border-box;"></div>
<svg class="s" style="left:1674.0px;top:279.0px;" width="10" height="9" viewBox="0 0 10 9"><path d="M1 8.5L9 .5M5 8.5L9 4.5" stroke="#555" stroke-width="1"/></svg>
<div class="t" style="left:1214.0px;top:304.5px;font-size:10.99px;line-height:14px;color:#6b6c76;-webkit-text-stroke:0.15px #6b6c76;">Describe how your policy works.</div>
<div class="r" style="left:1199.5px;top:330.4px;width:497.5px;height:46.4px;background:#fff;border:1px solid #c2c2c6;border-radius:4px;box-sizing:border-box;"></div>
<div class="r" style="left:1210.0px;top:325.0px;width:85.0px;height:11.0px;background:#fff;border-radius:0px;box-sizing:border-box;"></div>
<div class="t" style="left:1214.0px;top:324.0px;font-size:10.20px;line-height:13px;color:#6b6c76;letter-spacing:0.08772851562499984px;-webkit-text-stroke:0.2px #6b6c76;">Trigger condition</div>
<div class="t" style="left:1214.0px;top:344.0px;font-size:13.00px;line-height:17px;color:#1f2030;letter-spacing:0.41319094967532505px;-webkit-text-stroke:0.35px #1f2030;">{#context.attributes['jwt.claims']['scope'].contains('getInventory') == false}</div>
<div class="t" style="left:1214.0px;top:380.0px;font-size:10.81px;line-height:14px;color:#6b6c76;-webkit-text-stroke:0.15px #6b6c76;">The condition to execute this policy. Supports Expression Language.</div>
<div class="r" style="left:1199.5px;top:400.0px;width:497.5px;height:418.0px;background:#fff;border:1px solid #e3e3e3;border-radius:8px;box-sizing:border-box;"></div>
<div class="r" style="left:1207.4px;top:407.4px;width:481.6px;height:91.0px;background:#fff;border:1px solid #e3e3e3;border-radius:8px;box-sizing:border-box;"></div>
<div class="t" style="left:1215.6px;top:416.8px;font-size:12.80px;line-height:17px;color:#6b6c76;letter-spacing:0.6796250000000228px;-webkit-text-stroke:0.3px #6b6c76;">Whitelist</div>
<svg class="s" style="left:1653.0px;top:432.5px;" width="14" height="9" viewBox="0 0 14 9"><path d="M1 1.2l6.2 6.2 6.2-6.2" fill="none" stroke="#474852" stroke-width="1.6"/></svg>
<div class="r" style="left:1215.3px;top:458.4px;width:69.7px;height:32.1px;background:#fff;border:1px solid #e6e6e9;border-radius:4px;box-sizing:border-box;"></div>
<svg class="s" style="left:1228.4px;top:468.9px;" width="11" height="11" viewBox="0 0 11 11"><path d="M5.5 0v11M0 5.5h11" stroke="#1f2030" stroke-width="1.6"/></svg>
<div class="t" style="left:1249.3px;top:466.8px;font-size:12.00px;line-height:16px;color:#1f2030;letter-spacing:0.12375000000006864px;-webkit-text-stroke:0.4px #1f2030;">Add</div>
<div class="r" style="left:1207.4px;top:506.3px;width:481.6px;height:304.1px;background:#fff;border:1px solid #e3e3e3;border-radius:8px;box-sizing:border-box;"></div>
<div class="t" style="left:1215.6px;top:515.0px;font-size:12.80px;line-height:17px;color:#6b6c76;letter-spacing:0.6193750000000113px;-webkit-text-stroke:0.3px #6b6c76;">Blacklist</div>
<svg class="s" style="left:1653.0px;top:531.0px;" width="14" height="9" viewBox="0 0 14 9"><path d="M1 1.2l6.2 6.2 6.2-6.2" fill="none" stroke="#474852" stroke-width="1.6"/></svg>
<div class="t" style="left:1215.7px;top:557.5px;font-size:16.30px;line-height:21px;font-weight:700;color:#6b6c76;">Rule</div>
<div class="r" style="left:1215.0px;top:593.4px;width:423.0px;height:172.6px;background:#fff;border:1px solid #e3e3e3;border-radius:8px;box-sizing:border-box;"></div>
<div class="r" style="left:1223.0px;top:606.2px;width:407.5px;height:47.1px;background:#fff;border:1px solid #c2c2c6;border-radius:4px;box-sizing:border-box;"></div>
<div class="r" style="left:1232.0px;top:600.0px;width:72.0px;height:12.0px;background:#fff;border-radius:0px;box-sizing:border-box;"></div>
<div class="t" style="left:1237.5px;top:600.1px;font-size:10.00px;line-height:13px;color:#6b6c76;letter-spacing:0.06514423076923055px;-webkit-text-stroke:0.25px #6b6c76;">Path pattern *</div>
<div class="t" style="left:1237.5px;top:621.0px;font-size:13.00px;line-height:17px;color:#1f2030;letter-spacing:1.8853906250000003px;-webkit-text-stroke:0.25px #1f2030;">/**</div>
<div class="t" style="left:1237.5px;top:656.7px;font-size:11.10px;line-height:14px;color:#6b6c76;-webkit-text-stroke:0.15px #6b6c76;">Ant-style path patterns</div>
<svg class="s" style="left:1653.5px;top:655.5px;" width="13" height="13" viewBox="0 0 13 13"><path d="M1 1l11 11M12 1L1 12" stroke="#474852" stroke-width="1.5"/></svg>
<div class="r" style="left:1223.0px;top:689.6px;width:407.5px;height:46.4px;background:#fff;border:1px solid #c2c2c6;border-radius:4px;box-sizing:border-box;"></div>
<div class="r" style="left:1232.0px;top:684.0px;width:47.5px;height:11.0px;background:#fff;border-radius:0px;box-sizing:border-box;"></div>
<div class="t" style="left:1237.5px;top:683.3px;font-size:10.00px;line-height:13px;color:#6b6c76;letter-spacing:-0.22591145833333334px;-webkit-text-stroke:0.25px #6b6c76;">Methods</div>
<div class="t" style="left:1237.5px;top:704.8px;font-size:12.20px;line-height:16px;color:#1f2030;letter-spacing:0.14624233490565933px;-webkit-text-stroke:0.35px #1f2030;">CONNECT, DELETE, GET, HEAD, OPTIONS, PATCH, POST, P...</div>
<svg class="s" style="left:1607.0px;top:710.0px;" width="10" height="6" viewBox="0 0 10 6"><path d="M0 0h9.5L4.75 5z" fill="#555"/></svg>
<div class="t" style="left:1237.5px;top:739.5px;font-size:10.51px;line-height:14px;color:#6b6c76;-webkit-text-stroke:0.15px #6b6c76;">HTTP Methods</div>
<div class="r" style="left:1215.3px;top:770.0px;width:69.7px;height:32.4px;background:#fff;border:1px solid #e6e6e9;border-radius:4px;box-sizing:border-box;"></div>
<svg class="s" style="left:1228.4px;top:780.7px;" width="11" height="11" viewBox="0 0 11 11"><path d="M5.5 0v11M0 5.5h11" stroke="#1f2030" stroke-width="1.6"/></svg>
<div class="t" style="left:1249.3px;top:778.6px;font-size:12.00px;line-height:16px;color:#1f2030;letter-spacing:0.12375000000006864px;-webkit-text-stroke:0.4px #1f2030;">Add</div>
<div class="t" style="left:1727.8px;top:233.3px;font-size:28.30px;line-height:37px;font-weight:700;color:#0f1020;">Resource filtering policy</div>
<div class="t" style="left:1727.0px;top:296.6px;font-size:21.50px;line-height:28px;font-weight:700;color:#0f1020;">Phase</div>
<div class="r" style="left:1726.6px;top:338.3px;width:498.4px;height:69.7px;background:#fff;border:1px solid #e6e6e6;border-radius:0px;box-sizing:border-box;"></div>
<div class="r" style="left:1727.6px;top:339.3px;width:496.4px;height:33.2px;background:#f5f5f5;border-radius:0px;box-sizing:border-box;"></div>
<div class="r" style="left:1727.6px;top:372.5px;width:496.4px;height:1.0px;background:#e6e6e6;border-radius:0px;box-sizing:border-box;"></div>
<div class="r" style="left:1962.0px;top:339.3px;width:1.0px;height:67.7px;background:#e6e6e6;border-radius:0px;box-sizing:border-box;"></div>
<div class="t" style="left:1735.4px;top:347.0px;font-size:12.50px;line-height:16px;font-weight:700;color:#333;">onRequest</div>
<div class="t" style="left:1970.3px;top:347.0px;font-size:12.50px;line-height:16px;font-weight:700;color:#333;">onResponse</div>
<div class="t" style="left:1840.0px;top:383.0px;font-size:12.50px;line-height:16px;color:#333;">X</div>
<div class="r" style="left:1727.0px;top:439.3px;width:498.0px;height:1.0px;background:#e8e8e8;border-radius:0px;box-sizing:border-box;"></div>
<div class="t" style="left:1726.6px;top:465.9px;font-size:21.85px;line-height:28px;font-weight:700;color:#0f1020;">Description</div>
<div class="t" style="left:1726.6px;top:509.0px;font-size:12.80px;line-height:17px;color:#6b6c76;letter-spacing:0.004357142857149451px;">You can use the</div>
<div class="r" style="left:1823.4px;top:510.0px;width:133.6px;height:16.0px;background:#f5f5f5;border-radius:4px;box-sizing:border-box;"></div>
<div class="t" style="left:1827.0px;top:510.7px;font-size:11.76px;line-height:15px;color:#1a1a1a;font-family:'Liberation Mono',monospace;">resource-filtering</div>
<div class="t" style="left:1961.0px;top:509.0px;font-size:12.80px;line-height:17px;color:#6b6c76;letter-spacing:0.3510232558139573px;">policy to filter REST resources. By applying</div>
<div class="t" style="left:1726.6px;top:529.0px;font-size:12.80px;line-height:17px;color:#6b6c76;letter-spacing:0.3691807228915669px;">this filter, you can restrict or allow access to a specific resource determined by a</div>
<div class="t" style="left:1726.6px;top:548.8px;font-size:12.80px;line-height:17px;color:#6b6c76;letter-spacing:0.24361904761904896px;">path and a method (or an array of methods).</div>
<div class="t" style="left:1726.6px;top:586.6px;font-size:12.80px;line-height:17px;color:#6b6c76;letter-spacing:0.39524358974358986px;">This policy is mainly used in plan configuration, to limit subscriber access to</div>
<div class="t" style="left:1726.6px;top:606.5px;font-size:12.80px;line-height:17px;color:#6b6c76;letter-spacing:0.36156521739130815px;">specific resources only.</div>
<div class="t" style="left:1726.6px;top:644.2px;font-size:12.80px;line-height:17px;color:#6b6c76;letter-spacing:0.3124074074074096px;">A typical usage would be to allow access to all paths (</div>
<div class="r" style="left:2050.0px;top:645.0px;width:26.5px;height:16.0px;background:#f5f5f5;border-radius:4px;box-sizing:border-box;"></div>
<div class="t" style="left:2052.0px;top:645.0px;font-size:12.78px;line-height:17px;color:#1a1a1a;font-family:'Liberation Mono',monospace;">/**</div>
<div class="t" style="left:2078.0px;top:644.2px;font-size:12.80px;line-height:17px;color:#6b6c76;letter-spacing:0.26686363636363547px;">) but in read-only mode</div>
<div class="t" style="left:1726.6px;top:664.0px;font-size:12.80px;line-height:17px;color:#6b6c76;letter-spacing:-0.0012499999999929419px;">(GET method).</div>
<div class="r" style="left:1805.5px;top:701.2px;width:1.0px;height:52.8px;background:#e6e6e6;border-radius:0px;box-sizing:border-box;"></div>
<div class="t" style="left:1734.8px;top:718.1px;font-size:12.87px;line-height:17px;font-weight:700;color:#1a1a1a;">WARNING</div>
<div class="t" style="left:1820.7px;top:709.1px;font-size:12.80px;line-height:17px;color:#6b6c76;letter-spacing:-0.09613636363636147px;-webkit-text-stroke:0.3px #6b6c76;">You can’t apply whitelisting and blacklisting to the same resource.</div>
<div class="t" style="left:1820.7px;top:728.9px;font-size:12.80px;line-height:17px;color:#6b6c76;letter-spacing:-0.08348936170212841px;-webkit-text-stroke:0.3px #6b6c76;">Whitelisting takes precedence over blacklisting.</div>
<div class="r" style="left:1727.0px;top:786.3px;width:498.0px;height:1.0px;background:#e8e8e8;border-radius:0px;box-sizing:border-box;"></div>
<div class="t" style="left:1726.9px;top:812.2px;font-size:22.21px;line-height:29px;font-weight:700;color:#0f1020;">Compatibility with APIM</div>
<div class="r" style="left:1726.6px;top:854.4px;width:498.4px;height:105.6px;background:#fff;border:1px solid #e6e6e6;border-radius:0px;box-sizing:border-box;"></div>
<div class="r" style="left:1927.0px;top:855.0px;width:1.0px;height:105.0px;background:#e6e6e6;border-radius:0px;box-sizing:border-box;"></div>
<div class="t" style="left:1735.3px;top:863.7px;font-size:12.80px;line-height:17px;color:#333;letter-spacing:0.36900000000000305px;">Plugin version</div>
<div class="t" style="left:1936.0px;top:863.7px;font-size:12.80px;line-height:17px;color:#333;letter-spacing:0.2622727272727277px;">APIM version</div>
</div></div>
<div class="r" style="left:2261.5px;top:168.0px;width:18.0px;height:711.0px;background:#f8f8f8;border-radius:0px;box-sizing:border-box;border-left:1px solid #ececec;"></div>
<div class="r" style="left:2265.7px;top:171.5px;width:10.3px;height:227.1px;background:#c1c1c1;border-radius:5px;box-sizing:border-box;"></div>
<div class="t" style="left:2160.0px;top:895.1px;font-size:11.90px;line-height:15px;color:#111;letter-spacing:-0.008679687500000454px;-webkit-text-stroke:0.5px #111;">Cancel</div>
<div class="r" style="left:2215.0px;top:887.0px;width:57.0px;height:31.7px;background:#1a8e8c;border-radius:4px;box-sizing:border-box;"></div>
<div class="t" style="left:2229.5px;top:895.3px;font-size:11.90px;line-height:15px;color:#f0ffff;letter-spacing:-0.041520833333334416px;-webkit-text-stroke:0.45px #f0ffff;">Save</div>
</body></html>
